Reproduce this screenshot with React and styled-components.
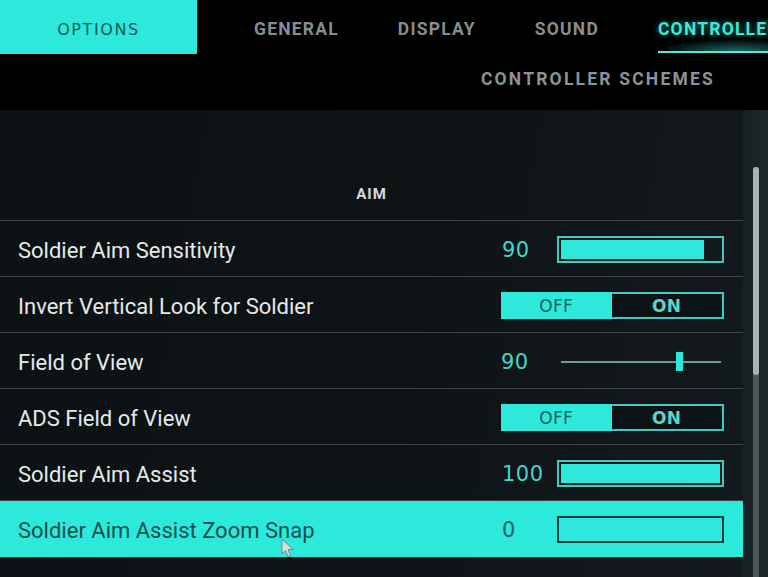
import React from "react";
import styled, { createGlobalStyle, css } from "styled-components";

const CYAN = "#2ce9dc";

const Global = createGlobalStyle`
  html, body { margin: 0; padding: 0; background: #000; }
  body { width: 768px; height: 577px; overflow: hidden; }
`;

const Screen = styled.div`
  width: 768px;
  height: 577px;
  overflow: hidden;
  position: relative;
  display: flex;
  flex-direction: column;
  background: #000;
  font-family: Roboto, "Liberation Sans", sans-serif;
`;

const TopBar = styled.header`
  height: 110px;
  flex: none;
  display: flex;
  flex-direction: column;
  background: #000;
`;

const TabRow = styled.nav`
  height: 54px;
  display: flex;
  align-items: stretch;
`;

const OptionsTab = styled.div`
  width: 197px;
  flex: none;
  background: ${CYAN};
  color: #0f5a56;
  display: flex;
  align-items: center;
  justify-content: center;
  font-family: "DejaVu Sans", sans-serif;
  font-size: 16px;
  letter-spacing: 1.6px;
  padding-top: 4px;
  box-sizing: border-box;
`;

const NavList = styled.div`
  display: flex;
  align-items: stretch;
  padding-left: 57px;
  gap: 59px;
  white-space: nowrap;
`;

const NavItem = styled.div`
  position: relative;
  display: flex;
  align-items: center;
  padding-top: 4px;
  font-family: Roboto, sans-serif;
  font-weight: 700;
  font-size: 17.5px;
  letter-spacing: 1.2px;
  color: #858d91;
  ${(p) =>
    p.$active &&
    css`
      color: #3ee8d8;
      text-shadow: 0 0 6px rgba(44, 233, 220, 0.55);
      &::after {
        content: "";
        position: absolute;
        left: 0;
        right: -40px;
        bottom: 1px;
        height: 2px;
        background: #5fe3d6;
      }
      &::before {
        content: "";
        position: absolute;
        left: 10px;
        right: -40px;
        bottom: 3px;
        height: 12px;
        background: radial-gradient(ellipse at 45% 100%, rgba(44, 233, 220, 0.45), rgba(44, 233, 220, 0) 70%);
      }
    `}
`;

const SubRow = styled.div`
  flex: 1;
  display: flex;
  justify-content: flex-end;
  align-items: center;
  padding-right: 53px;
  padding-bottom: 6px;
  font-family: Roboto, sans-serif;
  font-weight: 700;
  font-size: 17.5px;
  letter-spacing: 2.2px;
  color: #8b9396;
`;

const Body = styled.main`
  flex: 1;
  display: flex;
  background: linear-gradient(100deg, #0c1114 0%, #0e1316 55%, #141b1e 100%);
`;

const List = styled.section`
  width: 743px;
  flex: none;
  display: flex;
  flex-direction: column;
`;

const SectionHead = styled.div`
  height: 111px;
  box-sizing: border-box;
  display: flex;
  align-items: flex-end;
  justify-content: center;
  padding-bottom: 17px;
  border-bottom: 1px solid #3d4447;
  font-family: Roboto, sans-serif;
  font-weight: 700;
  font-size: 15px;
  letter-spacing: 1px;
  color: #d5dadb;
`;

const Row = styled.div`
  height: 56px;
  box-sizing: border-box;
  display: flex;
  align-items: center;
  padding: 2px 19px 0 18px;
  border-bottom: 1px solid ${(p) => (p.$selected ? "transparent" : "#3d4447")};
  background: ${(p) => (p.$selected ? CYAN : "transparent")};
  color: ${(p) => (p.$selected ? "#0f4f4b" : "#e4e9ea")};
  position: relative;
`;

const Label = styled.div`
  flex: 1;
  font-size: 22px;
  letter-spacing: 0px;
  padding-top: 1px;
`;

const Value = styled.div`
  width: 55px;
  font-family: "DejaVu Sans", sans-serif;
  font-size: 21px;
  letter-spacing: 0.5px;
  color: ${(p) => (p.$selected ? "#1a6560" : "#3fd8cc")};
`;

const Bar = styled.div`
  width: 167px;
  height: 27px;
  box-sizing: border-box;
  border: 2px solid ${(p) => (p.$selected ? "#0e3f3c" : "#44c9bf")};
  padding: 2px;
  display: flex;
  background: ${(p) => (p.$selected ? "transparent" : "#0f1a1b")};
`;

const BarFill = styled.div`
  height: 100%;
  background: ${CYAN};
`;

const Toggle = styled.div`
  width: 223px;
  height: 27px;
  display: flex;
  box-sizing: border-box;
`;

const ToggleHalf = styled.div`
  flex: 1;
  display: flex;
  align-items: center;
  justify-content: center;
  font-family: "DejaVu Sans", sans-serif;
  font-size: 17px;
  letter-spacing: 0.3px;
  box-sizing: border-box;
  ${(p) =>
    p.$on
      ? css`
          background: ${CYAN};
          color: #17615c;
        `
      : css`
          background: #0b1314;
          color: #56d8ce;
          font-weight: bold;
          border: 2px solid #3fc9bf;
          border-left: none;
        `}
`;

const Slider = styled.div`
  width: 160px;
  height: 20px;
  margin-left: 5px;
  margin-right: 3px;
  position: relative;
  display: flex;
  align-items: center;
`;

const Track = styled.div`
  width: 100%;
  height: 2px;
  background: #6a9e9a;
`;

const Thumb = styled.div`
  position: absolute;
  top: 0;
  width: 7px;
  height: 19px;
  background: ${CYAN};
`;

const ScrollCol = styled.aside`
  flex: 1;
  background: linear-gradient(90deg, #172024, #1d272a);
  display: flex;
  justify-content: center;
  padding-top: 57px;
`;

const ScrollTrack = styled.div`
  width: 6px;
  height: 500px;
  margin-left: 1px;
  border-radius: 3px;
  background: #4c5558;
  display: flex;
  flex-direction: column;
`;

const ScrollThumb = styled.div`
  height: 208px;
  border-radius: 3px;
  background: #a9b3b5;
`;

const Cursor = styled.svg`
  position: absolute;
  left: 281px;
  top: 538px;
`;

const rows = [
  { label: "Soldier Aim Sensitivity", type: "bar", value: 90, fill: 0.9 },
  { label: "Invert Vertical Look for Soldier", type: "toggle" },
  { label: "Field of View", type: "slider", value: 90, pos: 0.72 },
  { label: "ADS Field of View", type: "toggle" },
  { label: "Soldier Aim Assist", type: "bar", value: 100, fill: 1 },
  { label: "Soldier Aim Assist Zoom Snap", type: "bar", value: 0, fill: 0, selected: true },
];

export default function App() {
  return (
    <Screen>
      <Global />
      <TopBar>
        <TabRow>
          <OptionsTab>OPTIONS</OptionsTab>
          <NavList>
            <NavItem>GENERAL</NavItem>
            <NavItem>DISPLAY</NavItem>
            <NavItem>SOUND</NavItem>
            <NavItem $active>CONTROLLER</NavItem>
          </NavList>
        </TabRow>
        <SubRow>CONTROLLER SCHEMES</SubRow>
      </TopBar>
      <Body>
        <List>
          <SectionHead>AIM</SectionHead>
          {rows.map((r) => (
            <Row key={r.label} $selected={r.selected}>
              <Label>{r.label}</Label>
              {r.type === "bar" && (
                <>
                  <Value $selected={r.selected}>{r.value}</Value>
                  <Bar $selected={r.selected}>
                    {r.fill > 0 && <BarFill style={{ width: `${r.fill * 100}%` }} />}
                  </Bar>
                </>
              )}
              {r.type === "slider" && (
                <>
                  <Value>{r.value}</Value>
                  <Slider>
                    <Track />
                    <Thumb style={{ left: `${r.pos * 100}%` }} />
                  </Slider>
                </>
              )}
              {r.type === "toggle" && (
                <Toggle>
                  <ToggleHalf $on>OFF</ToggleHalf>
                  <ToggleHalf>ON</ToggleHalf>
                </Toggle>
              )}
            </Row>
          ))}
        </List>
        <ScrollCol>
          <ScrollTrack>
            <ScrollThumb />
          </ScrollTrack>
        </ScrollCol>
      </Body>
      <Cursor width="14" height="20" viewBox="0 0 14 20">
        <path d="M1 1 L1 16 L4.5 12.5 L7 18.5 L9.5 17.5 L7 11.5 L12 11.5 Z" fill="#d9dede" stroke="#7a8585" strokeWidth="1" />
      </Cursor>
    </Screen>
  );
}
